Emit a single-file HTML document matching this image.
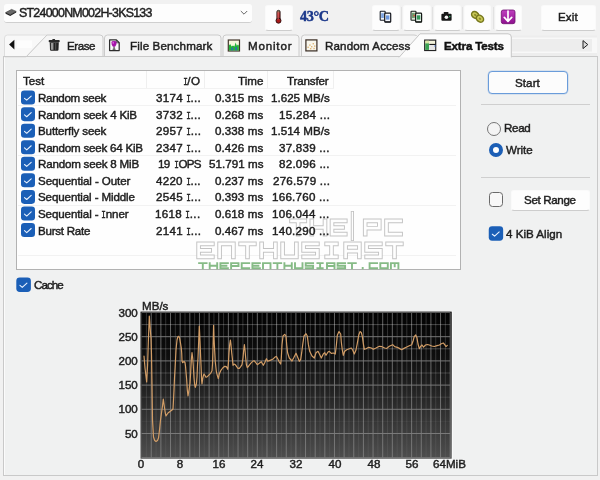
<!DOCTYPE html>
<html><head><meta charset="utf-8"><title>HD Tune Pro - Extra Tests</title>
<style>
html,body{margin:0;padding:0;}
body{width:600px;height:480px;background:#f1f1f1;position:relative;overflow:hidden;font-family:"Liberation Sans",sans-serif;font-size:12px;color:#1e1e1e;}
.a{position:absolute;box-sizing:border-box;}
.t{position:absolute;white-space:nowrap;line-height:14px;height:14px;will-change:transform;-webkit-text-stroke:0.45px currentColor;}
.btn{position:absolute;background:#fdfdfd;border:1px solid #fafafa;border-bottom-color:#cdcdcd;border-radius:3px;box-sizing:border-box;}
.cb{position:absolute;width:14px;height:14px;background:#1c5fb6;border-radius:3.5px;box-sizing:border-box;}
.cb svg{position:absolute;left:0;top:0;}
</style></head><body>
<!-- ===== top bar ===== -->
<div class="a" id="combo" style="left:4px;top:4px;width:248px;height:19px;background:#fdfdfd;border-radius:3px;border-bottom:1px solid #cfcfcf;"></div>
<div class="t" id="drive" style="left:19.04px;top:6.30px;font-size:12.4px;letter-spacing:-0.737px;">ST24000NM002H-3KS133</div>
<div class="btn" style="left:265px;top:5px;width:28px;height:26px;"></div>
<div class="t" id="temp" style="left:300.01px;top:9.18px;font-size:14.2px;letter-spacing:-0.353px;font-family:'Liberation Serif',serif;font-weight:bold;color:#1a378a;">43°C</div>
<div class="btn" style="left:372px;top:5px;width:28px;height:26px;"></div>
<div class="btn" style="left:403px;top:5px;width:28px;height:26px;"></div>
<div class="btn" style="left:434px;top:5px;width:27px;height:26px;"></div>
<div class="btn" style="left:464px;top:5px;width:27px;height:26px;"></div>
<div class="btn" style="left:495px;top:5px;width:27px;height:26px;"></div>
<div class="btn" style="left:541px;top:5px;width:55px;height:26px;"></div>
<div class="a" style="left:401px;top:7px;width:1px;height:22px;background:#e2e2e2;"></div>
<div class="a" style="left:432px;top:7px;width:1px;height:22px;background:#e2e2e2;"></div>
<div class="a" style="left:462px;top:7px;width:1px;height:22px;background:#e2e2e2;"></div>
<div class="a" style="left:493px;top:7px;width:1px;height:22px;background:#e2e2e2;"></div>
<div class="t" id="exit" style="left:558.35px;top:10.28px;font-size:11.6px;letter-spacing:0.133px;">Exit</div>
<svg class="a" style="left:0;top:0" width="600" height="34" viewBox="0 0 600 34">
<defs>
<linearGradient id="gTh" x1="0" y1="0" x2="0" y2="1"><stop offset="0" stop-color="#5a8a5a"/><stop offset="0.3" stop-color="#c03030"/><stop offset="1" stop-color="#a01818"/></linearGradient>
<linearGradient id="gPu" x1="0" y1="0" x2="0" y2="1"><stop offset="0" stop-color="#c040c0"/><stop offset="1" stop-color="#8e108e"/></linearGradient>
</defs>
<!-- drive glyph -->
<path d="M5.6 12.6 L11.6 9.4 L16.2 11.4 L10.2 14.8 Z" fill="#6a6a6a" stroke="#333" stroke-width="0.6"/>
<path d="M5.6 12.6 L10.2 14.8 L16.2 11.4 L16.2 12.4 L10.2 15.9 L5.6 13.7 Z" fill="#222"/>
<!-- chevron -->
<path d="M240.8 11 L244 14.2 L247.2 11" fill="none" stroke="#666" stroke-width="1"/>
<!-- thermometer -->
<rect x="276.9" y="10.4" width="3.2" height="10" rx="1.4" fill="url(#gTh)" stroke="#2a1414" stroke-width="0.9"/>
<circle cx="278.5" cy="20.7" r="2.5" fill="#a81818" stroke="#2a0c0c" stroke-width="0.9"/>
<rect x="277.6" y="11.5" width="1" height="8" fill="#e88" opacity="0.7"/>
<!-- copy text -->
<rect x="380.2" y="11.3" width="5" height="9" rx="0.6" fill="#eef3fb" stroke="#1e222c" stroke-width="1.1"/>
<rect x="381.2" y="13.2" width="2.6" height="4.8" fill="#7ba3e2"/>
<rect x="384.7" y="13.2" width="6" height="9" rx="0.8" fill="#f6f8fc" stroke="#16181e" stroke-width="1.2"/>
<rect x="386" y="15.4" width="3.4" height="4.2" fill="#6c98e0"/>
<rect x="385" y="21.3" width="5.6" height="1" fill="#16181e"/>
<!-- copy screenshot -->
<rect x="411" y="11.3" width="5" height="9" rx="0.6" fill="#dce6d6" stroke="#1e2620" stroke-width="1.1"/>
<rect x="412" y="13" width="2.8" height="5" fill="#6fa070"/>
<rect x="413.4" y="14.8" width="1.5" height="1.6" fill="#d4503c"/>
<rect x="415.6" y="13.2" width="6" height="9" rx="0.8" fill="#eef4ee" stroke="#141a16" stroke-width="1.2"/>
<rect x="416.9" y="15.3" width="3.4" height="4.3" fill="#34985a"/>
<rect x="415.9" y="21.3" width="5.6" height="1" fill="#141a16"/>
<!-- camera -->
<rect x="443.8" y="12" width="4.6" height="2.6" rx="0.6" fill="#1a1a1a"/>
<rect x="441.4" y="13.8" width="10.2" height="6.9" rx="1" fill="#161616"/>
<circle cx="446.4" cy="17.2" r="1.8" fill="#f4f4f4"/>
<circle cx="449.7" cy="16.6" r="0.8" fill="#2aa860"/>
<!-- chain / options -->
<g transform="rotate(38 477.5 16.8)"><ellipse cx="474.6" cy="16.8" rx="3.9" ry="3.1" fill="#c9c857" stroke="#77781e" stroke-width="1.5"/><ellipse cx="480.6" cy="16.8" rx="3.9" ry="3.1" fill="#c9c857" stroke="#77781e" stroke-width="1.5"/><ellipse cx="474.6" cy="16.8" rx="1.3" ry="1" fill="#8a8a2c"/><ellipse cx="480.6" cy="16.8" rx="1.3" ry="1" fill="#8a8a2c"/></g>
<!-- save / down -->
<rect x="501.3" y="10" width="13.7" height="13.7" rx="2" fill="url(#gPu)" stroke="#6e0e6e" stroke-width="0.8"/>
<path d="M508 11 L508 20.5 M504.3 17.4 L508 21.4 L511.7 17.4" fill="none" stroke="#fff" stroke-width="1.7" stroke-linecap="round" stroke-linejoin="round"/>
</svg>
<!-- ===== pane ===== -->
<div class="a" id="pane" style="left:3px;top:56px;width:595px;height:420px;border:1px solid #c9c9c9;background:#f0f1f1;box-shadow:inset 1px 0 0 #fbfbfb;"></div>
<!-- ===== tabs ===== -->
<svg class="a" style="left:0;top:30px" width="600" height="30" viewBox="0 30 600 30">
<!-- scroll-left stub -->
<path d="M4.5 57 L4.5 38 Q4.5 35 7.5 35 L47 35 L26 57 Z" fill="#f8f8f8" stroke="#dedede" stroke-width="1"/>
<rect x="17" y="40.4" width="15" height="7.6" fill="#fdfdfd"/>
<path d="M14.4 39.7 L14.4 49.5 L9.1 44.6 Z" fill="#111"/>
<!-- strip right of active tab -->
<rect x="512" y="35.5" width="85" height="20.5" fill="#ededed"/>
<rect x="512" y="37.6" width="85" height="1.2" fill="#fafafa"/><rect x="512" y="51.6" width="85" height="1.2" fill="#fafafa"/>
<rect x="592" y="39" width="5" height="13" fill="#f8f8f8"/>
<path d="M583 40.6 L583 48.6 L587.8 44.6 Z" fill="#dcdcdc" stroke="#222" stroke-width="1" stroke-linejoin="miter"/>
<!-- inactive tabs -->
<path d="M26 57 L47 35 L100 35 Q103 35 103 38 L103 57" fill="#f5f5f5" stroke="#cbcbcb" stroke-width="1"/>
<path d="M104.5 57 L104.5 38 Q104.5 35 107.5 35 L218 35 Q221 35 221 38 L221 57" fill="#f5f5f5" stroke="#cbcbcb" stroke-width="1"/>
<path d="M223 57 L223 38 Q223 35 226 35 L296 35 Q299 35 299 38 L299 57" fill="#f5f5f5" stroke="#cbcbcb" stroke-width="1"/>
<path d="M301.5 57 L301.5 38 Q301.5 35 304.5 35 L414 35 Q417 35 418 37 L418 57" fill="#f5f5f5" stroke="#cbcbcb" stroke-width="1"/>
<!-- pane top line -->
<rect x="3" y="56" width="595" height="1" fill="#c9c9c9"/>
<!-- active tab -->
<path d="M399 57.6 L420 33.8 L508 33.8 Q511.3 33.8 511.3 37 L511.3 57.6 Z" fill="#fcfcfc"/>
<path d="M399 57.4 L420 33.8 L508 33.8 Q511.3 33.8 511.3 37 L511.3 57.4" fill="none" stroke="#c6c6c6" stroke-width="1"/>
<!-- trash icon -->
<rect x="52.3" y="39.1" width="2.8" height="1.4" rx="0.4" fill="#2a2a2a"/>
<rect x="48.7" y="40" width="11" height="2.3" rx="0.7" fill="#2b2b2b"/>
<path d="M49.7 42.3 L58.8 42.3 L58.5 49.8 Q58.4 50.7 57.4 50.7 L51.1 50.7 Q50.1 50.7 50 49.8 Z" fill="#232323"/>
<rect x="50.9" y="43" width="2.2" height="6.8" fill="#9a9a9a"/><rect x="53.1" y="43" width="0.9" height="6.8" fill="#5c5c5c"/>
<rect x="55.2" y="43" width="1" height="6.8" fill="#5a5a5a"/>
<!-- file benchmark icon -->
<path d="M109.6 39.9 L116.4 39.9 L119.2 42.7 L119.2 50.6 L109.6 50.6 Z" fill="#fafafa" stroke="#2e2e2e" stroke-width="1.25" stroke-linejoin="round"/>
<path d="M116.3 40 L116.3 42.8 L119.1 42.8" fill="none" stroke="#2e2e2e" stroke-width="0.8"/>
<rect x="112.6" y="40.3" width="2.8" height="1" fill="#9a9a9a"/>
<path d="M111.4 42 Q111.4 40.9 114 40.9 Q116.6 40.9 116.6 42 L116.3 44.4 Q115.8 46.8 114 46.9 Q112.2 46.8 111.7 44.4 Z" fill="#a515a8"/>
<ellipse cx="113.2" cy="42.8" rx="0.8" ry="1.1" fill="#d862dc"/>
<rect x="113.5" y="46.8" width="1.1" height="2.4" fill="#3a3a3a"/><rect x="112.6" y="48.8" width="2.9" height="0.9" fill="#3a3a3a"/>
<!-- monitor icon -->
<rect x="228.3" y="40" width="11.2" height="11" fill="#f6f6de" stroke="#43352a" stroke-width="1.2"/>
<path d="M228.9 50.4 L228.9 45.6 L230.2 44 L231.6 46.4 L233 45.4 L234.4 46.6 L235.6 42.4 L236.8 45.8 L238 44.4 L238.9 45.6 L238.9 50.4 Z" fill="#22b23a"/>
<rect x="231.4" y="47.6" width="1.4" height="2.8" fill="#3060c8"/><rect x="235.4" y="47" width="1.4" height="3.4" fill="#3060c8"/>
<!-- random access icon -->
<rect x="305.9" y="39.9" width="11" height="11" fill="#f8f6ec" stroke="#3e3228" stroke-width="1.25"/>
<g fill="#d9a85e" opacity="0.8"><rect x="307.4" y="46.6" width="1.4" height="1.4"/><rect x="309.2" y="44.4" width="1.4" height="1.4"/><rect x="311" y="46" width="1.4" height="1.4"/><rect x="312.6" y="43" width="1.4" height="1.4"/><rect x="314" y="45.4" width="1.4" height="1.4"/><rect x="310" y="48" width="1.4" height="1.4"/><rect x="313.4" y="47.8" width="1.4" height="1.4"/></g>
<!-- extra tests icon -->
<rect x="424.7" y="40.1" width="11" height="10.4" fill="#f3f3dc" stroke="#242424" stroke-width="1.2"/>
<rect x="425.3" y="40.7" width="3.7" height="3" fill="#dbe7a6"/>
<rect x="425.3" y="43.4" width="3.7" height="6.5" fill="#3ba253"/>
<rect x="429" y="45" width="6.1" height="4.9" fill="#e6e6e6"/>
<rect x="429.3" y="43.9" width="6.2" height="1.1" fill="#1c1c1c"/>
<rect x="434.6" y="45.2" width="0.9" height="1.6" fill="#3a6cd0"/>
</svg>
<div class="t" id="tErase" style="left:67.05px;top:38.78px;font-size:11.6px;letter-spacing:-0.459px;">Erase</div>
<div class="t" id="tFile" style="left:129.75px;top:38.78px;font-size:11.6px;letter-spacing:0.135px;">File Benchmark</div>
<div class="t" id="tMon" style="left:247.65px;top:38.78px;font-size:11.6px;letter-spacing:0.811px;">Monitor</div>
<div class="t" id="tRand" style="left:324.65px;top:38.78px;font-size:11.6px;letter-spacing:0.129px;">Random Access</div>
<div class="t" id="tExtra" style="left:443.82px;top:38.78px;font-size:11.6px;letter-spacing:-0.163px;font-weight:bold;color:#111;">Extra Tests</div>
<!-- ===== list ===== -->
<div class="a" id="list" style="left:16px;top:70px;width:445px;height:200px;border:1px solid #b2b2b2;background:#fefefe;"></div>
<div class="a" style="left:18px;top:88px;width:316px;height:1px;background:#f2f2f2;"></div>
<div class="a" style="left:18px;top:105px;width:438px;height:1px;background:#f2f2f2;"></div>
<div class="a" style="left:18px;top:155px;width:438px;height:1px;background:#f2f2f2;"></div>
<div class="a" style="left:18px;top:205px;width:438px;height:1px;background:#f2f2f2;"></div>
<div class="a" style="left:18px;top:255px;width:438px;height:1px;background:#f2f2f2;"></div>
<!-- watermark -->
<svg class="a" style="left:0;top:205px" width="600" height="70" viewBox="0 205 600 70">
<path d="M291.5,220.9 L304.8,220.9 M298.1,220.9 L298.1,234.1 M311.8,220.9 L311.8,234.1 M325.0,220.9 L325.0,234.1 M311.8,227.5 L325.0,227.5 M345.3,220.9 L332.0,220.9 L332.0,234.1 L345.3,234.1 M332.0,227.5 L342.6,227.5 M365.2,234.1 L365.2,220.9 L379.3,220.9 L379.3,228.2 L365.2,228.2 M400.6,220.9 L386.5,220.9 L386.5,234.1 L400.6,234.1" fill="none" stroke="#c3c3c3" stroke-width="4.6" stroke-linecap="square" stroke-linejoin="miter"/>
<path d="M212.4,243.9 L198.6,243.9 L198.6,256.9 L212.4,256.9 M198.6,250.4 L209.7,250.4 M219.6,256.9 L219.6,243.9 L233.4,243.9 L233.4,256.9 M240.6,243.9 L254.4,243.9 M247.5,243.9 L247.5,256.9 M261.6,243.9 L261.6,256.9 M275.4,243.9 L275.4,256.9 M261.6,250.4 L275.4,250.4 M282.6,243.9 L282.6,256.9 L296.4,256.9 L296.4,243.9 M317.4,243.9 L303.6,243.9 L303.6,250.4 L317.4,250.4 L317.4,256.9 L303.6,256.9 M326.6,243.9 L336.4,243.9 M331.5,243.9 L331.5,256.9 M326.6,256.9 L336.4,256.9 M345.6,256.9 L345.6,243.9 L359.4,243.9 L359.4,256.9 M345.6,251.1 L359.4,251.1 M380.4,243.9 L366.6,243.9 L366.6,250.4 L380.4,250.4 L380.4,256.9 L366.6,256.9 M387.6,243.9 L401.4,243.9 M394.5,243.9 L394.5,256.9" fill="none" stroke="#c3c3c3" stroke-width="4.6" stroke-linecap="square" stroke-linejoin="miter"/>
<path d="M352.4,211 L352.4,241" fill="none" stroke="#c3c3c3" stroke-width="3.2"/>
<path d="M291.5,220.9 L304.8,220.9 M298.1,220.9 L298.1,234.1 M311.8,220.9 L311.8,234.1 M325.0,220.9 L325.0,234.1 M311.8,227.5 L325.0,227.5 M345.3,220.9 L332.0,220.9 L332.0,234.1 L345.3,234.1 M332.0,227.5 L342.6,227.5 M365.2,234.1 L365.2,220.9 L379.3,220.9 L379.3,228.2 L365.2,228.2 M400.6,220.9 L386.5,220.9 L386.5,234.1 L400.6,234.1" fill="none" stroke="#fefefe" stroke-width="2.6999999999999997" stroke-linecap="square" stroke-linejoin="miter"/>
<path d="M212.4,243.9 L198.6,243.9 L198.6,256.9 L212.4,256.9 M198.6,250.4 L209.7,250.4 M219.6,256.9 L219.6,243.9 L233.4,243.9 L233.4,256.9 M240.6,243.9 L254.4,243.9 M247.5,243.9 L247.5,256.9 M261.6,243.9 L261.6,256.9 M275.4,243.9 L275.4,256.9 M261.6,250.4 L275.4,250.4 M282.6,243.9 L282.6,256.9 L296.4,256.9 L296.4,243.9 M317.4,243.9 L303.6,243.9 L303.6,250.4 L317.4,250.4 L317.4,256.9 L303.6,256.9 M326.6,243.9 L336.4,243.9 M331.5,243.9 L331.5,256.9 M326.6,256.9 L336.4,256.9 M345.6,256.9 L345.6,243.9 L359.4,243.9 L359.4,256.9 M345.6,251.1 L359.4,251.1 M380.4,243.9 L366.6,243.9 L366.6,250.4 L380.4,250.4 L380.4,256.9 L366.6,256.9 M387.6,243.9 L401.4,243.9 M394.5,243.9 L394.5,256.9" fill="none" stroke="#fefefe" stroke-width="2.6999999999999997" stroke-linecap="square" stroke-linejoin="miter"/>
<path d="M352.4,211.8 L352.4,240.2" fill="none" stroke="#fefefe" stroke-width="1.4"/>
<path d="M199.1,263.1 L206.6,263.1 M202.8,263.1 L202.8,268.2 M209.7,263.1 L209.7,268.2 M217.2,263.1 L217.2,268.2 M209.7,265.7 L217.2,265.7 M227.9,263.1 L220.4,263.1 L220.4,268.2 L227.9,268.2 M220.4,265.7 L226.4,265.7 M231.1,268.2 L231.1,263.1 L238.5,263.1 L238.5,266.0 L231.1,266.0 M249.2,263.1 L241.7,263.1 L241.7,268.2 L249.2,268.2 M259.9,263.1 L252.4,263.1 L252.4,268.2 L259.9,268.2 M252.4,265.7 L258.4,265.7 M263.0,268.2 L263.0,263.1 L270.5,263.1 L270.5,268.2 M273.7,263.1 L281.2,263.1 M277.4,263.1 L277.4,268.2 M284.4,263.1 L284.4,268.2 M291.8,263.1 L291.8,268.2 M284.4,265.7 L291.8,265.7 M295.0,263.1 L295.0,268.2 L302.5,268.2 L302.5,263.1 M313.1,263.1 L305.7,263.1 L305.7,265.7 L313.1,265.7 L313.1,268.2 L305.7,268.2 M317.4,263.1 L322.7,263.1 M320.1,263.1 L320.1,268.2 M317.4,268.2 L322.7,268.2 M327.0,268.2 L327.0,263.1 L334.5,263.1 L334.5,268.2 M327.0,266.0 L334.5,266.0 M345.1,263.1 L337.6,263.1 L337.6,265.7 L345.1,265.7 L345.1,268.2 L337.6,268.2 M348.3,263.1 L355.8,263.1 M352.0,263.1 L352.0,268.2 M362.7,268.0 L362.7,268.2 M377.1,263.1 L369.6,263.1 L369.6,268.2 L377.1,268.2 M380.3,263.1 L387.8,263.1 L387.8,268.2 L380.3,268.2 Z M390.9,268.2 L390.9,263.1 L398.4,263.1 L398.4,268.2 M394.7,263.1 L394.7,266.2" fill="none" stroke="#86bb86" stroke-width="1.9" stroke-linecap="square" stroke-linejoin="miter"/>
</svg>
<div class="t" id="hTest" style="left:22.64px;top:74.38px;font-size:11.6px;letter-spacing:-0.010px;">Test</div>
<div class="t" id="hIO" style="left:183.22px;top:74.38px;font-size:11.6px;letter-spacing:0.557px;"><span style="display:inline-block;font-family:'Liberation Mono',monospace;width:6.96px;margin:0 -1.39px;transform:scaleX(.66);letter-spacing:0;">I</span>/O</div>
<div class="t" id="hTime" style="left:237.64px;top:74.38px;font-size:11.6px;letter-spacing:0.010px;">Time</div>
<div class="t" id="hTr" style="left:287.04px;top:74.38px;font-size:11.6px;letter-spacing:-0.144px;">Transfer</div>
<div class="a" style="left:146px;top:71px;width:1px;height:17px;background:#efefef;"></div>
<div class="a" style="left:204px;top:71px;width:1px;height:17px;background:#efefef;"></div>
<div class="a" style="left:267px;top:71px;width:1px;height:17px;background:#efefef;"></div>
<div class="a" style="left:333px;top:71px;width:1px;height:17px;background:#efefef;"></div>
<svg class="a" style="left:20px;top:89px" width="18" height="18" viewBox="0 0 18 18"><rect x="1.00" y="1.60" width="14.0" height="14.0" rx="3.30" fill="#1b5fb7"/><path d="M4.50 9.30 L6.70 11.20 L11.20 7.10" fill="none" stroke="#eaf3ff" stroke-width="1.1" stroke-linecap="round" stroke-linejoin="round"/></svg>
<div class="t" id="r0a" style="left:38.00px;top:91.18px;font-size:11.6px;letter-spacing:-0.314px;">Random seek</div>
<div class="t" id="r0b" style="left:155.88px;top:91.18px;font-size:11.6px;letter-spacing:0.264px;">3174 <span style="display:inline-block;font-family:'Liberation Mono',monospace;width:6.96px;margin:0 -1.39px;transform:scaleX(.66);letter-spacing:0;">I</span>...</div>
<div class="t" id="r0c" style="left:215.17px;top:91.18px;font-size:11.6px;letter-spacing:0.076px;">0.315 ms</div>
<div class="t" id="r0d" style="left:271.48px;top:91.18px;font-size:11.6px;letter-spacing:0.007px;">1.625 MB/s</div>
<svg class="a" style="left:20px;top:106px" width="18" height="18" viewBox="0 0 18 18"><rect x="1.00" y="1.15" width="14.0" height="14.0" rx="3.30" fill="#1b5fb7"/><path d="M4.50 8.85 L6.70 10.75 L11.20 6.65" fill="none" stroke="#eaf3ff" stroke-width="1.1" stroke-linecap="round" stroke-linejoin="round"/></svg>
<div class="t" id="r1a" style="left:38.00px;top:107.73px;font-size:11.6px;letter-spacing:-0.216px;">Random seek 4 KiB</div>
<div class="t" id="r1b" style="left:155.88px;top:107.73px;font-size:11.6px;letter-spacing:0.264px;">3732 <span style="display:inline-block;font-family:'Liberation Mono',monospace;width:6.96px;margin:0 -1.39px;transform:scaleX(.66);letter-spacing:0;">I</span>...</div>
<div class="t" id="r1c" style="left:215.17px;top:107.73px;font-size:11.6px;letter-spacing:0.076px;">0.268 ms</div>
<div class="t" id="r1d" style="left:278.72px;top:107.73px;font-size:11.6px;letter-spacing:0.285px;">15.284 ...</div>
<svg class="a" style="left:20px;top:122px" width="18" height="18" viewBox="0 0 18 18"><rect x="1.00" y="1.70" width="14.0" height="14.0" rx="3.30" fill="#1b5fb7"/><path d="M4.50 9.40 L6.70 11.30 L11.20 7.20" fill="none" stroke="#eaf3ff" stroke-width="1.1" stroke-linecap="round" stroke-linejoin="round"/></svg>
<div class="t" id="r2a" style="left:38.00px;top:124.28px;font-size:11.6px;letter-spacing:-0.142px;">Butterfly seek</div>
<div class="t" id="r2b" style="left:155.74px;top:124.28px;font-size:11.6px;letter-spacing:0.281px;">2957 <span style="display:inline-block;font-family:'Liberation Mono',monospace;width:6.96px;margin:0 -1.39px;transform:scaleX(.66);letter-spacing:0;">I</span>...</div>
<div class="t" id="r2c" style="left:215.17px;top:124.28px;font-size:11.6px;letter-spacing:0.076px;">0.338 ms</div>
<div class="t" id="r2d" style="left:271.48px;top:124.28px;font-size:11.6px;letter-spacing:0.007px;">1.514 MB/s</div>
<svg class="a" style="left:20px;top:139px" width="18" height="18" viewBox="0 0 18 18"><rect x="1.00" y="1.25" width="14.0" height="14.0" rx="3.30" fill="#1b5fb7"/><path d="M4.50 8.95 L6.70 10.85 L11.20 6.75" fill="none" stroke="#eaf3ff" stroke-width="1.1" stroke-linecap="round" stroke-linejoin="round"/></svg>
<div class="t" id="r3a" style="left:38.00px;top:140.83px;font-size:11.6px;letter-spacing:-0.230px;">Random seek 64 KiB</div>
<div class="t" id="r3b" style="left:155.74px;top:140.83px;font-size:11.6px;letter-spacing:0.281px;">2347 <span style="display:inline-block;font-family:'Liberation Mono',monospace;width:6.96px;margin:0 -1.39px;transform:scaleX(.66);letter-spacing:0;">I</span>...</div>
<div class="t" id="r3c" style="left:215.17px;top:140.83px;font-size:11.6px;letter-spacing:0.076px;">0.426 ms</div>
<div class="t" id="r3d" style="left:279.17px;top:140.83px;font-size:11.6px;letter-spacing:0.236px;">37.839 ...</div>
<svg class="a" style="left:20px;top:155px" width="18" height="18" viewBox="0 0 18 18"><rect x="1.00" y="1.80" width="14.0" height="14.0" rx="3.30" fill="#1b5fb7"/><path d="M4.50 9.50 L6.70 11.40 L11.20 7.30" fill="none" stroke="#eaf3ff" stroke-width="1.1" stroke-linecap="round" stroke-linejoin="round"/></svg>
<div class="t" id="r4a" style="left:38.00px;top:157.38px;font-size:11.6px;letter-spacing:-0.205px;">Random seek 8 MiB</div>
<div class="t" id="r4b" style="left:157.54px;top:157.38px;font-size:11.6px;letter-spacing:-0.702px;word-spacing:2.2px;">19 <span style="display:inline-block;font-family:'Liberation Mono',monospace;width:6.96px;margin:0 -1.39px;transform:scaleX(.66);letter-spacing:0;">I</span>OPS</div>
<div class="t" id="r4c" style="left:208.83px;top:157.38px;font-size:11.6px;letter-spacing:0.053px;">51.791 ms</div>
<div class="t" id="r4d" style="left:279.10px;top:157.38px;font-size:11.6px;letter-spacing:0.243px;">82.096 ...</div>
<svg class="a" style="left:20px;top:172px" width="18" height="18" viewBox="0 0 18 18"><rect x="1.00" y="1.35" width="14.0" height="14.0" rx="3.30" fill="#1b5fb7"/><path d="M4.50 9.05 L6.70 10.95 L11.20 6.85" fill="none" stroke="#eaf3ff" stroke-width="1.1" stroke-linecap="round" stroke-linejoin="round"/></svg>
<div class="t" id="r5a" style="left:38.00px;top:173.93px;font-size:11.6px;letter-spacing:-0.096px;">Sequential - Outer</div>
<div class="t" id="r5b" style="left:156.05px;top:173.93px;font-size:11.6px;letter-spacing:0.242px;">4220 <span style="display:inline-block;font-family:'Liberation Mono',monospace;width:6.96px;margin:0 -1.39px;transform:scaleX(.66);letter-spacing:0;">I</span>...</div>
<div class="t" id="r5c" style="left:215.17px;top:173.93px;font-size:11.6px;letter-spacing:0.076px;">0.237 ms</div>
<div class="t" id="r5d" style="left:272.74px;top:173.93px;font-size:11.6px;letter-spacing:0.210px;">276.579 ...</div>
<svg class="a" style="left:20px;top:188px" width="18" height="18" viewBox="0 0 18 18"><rect x="1.00" y="1.90" width="14.0" height="14.0" rx="3.30" fill="#1b5fb7"/><path d="M4.50 9.60 L6.70 11.50 L11.20 7.40" fill="none" stroke="#eaf3ff" stroke-width="1.1" stroke-linecap="round" stroke-linejoin="round"/></svg>
<div class="t" id="r6a" style="left:38.00px;top:190.48px;font-size:11.6px;letter-spacing:-0.126px;">Sequential - Middle</div>
<div class="t" id="r6b" style="left:155.74px;top:190.48px;font-size:11.6px;letter-spacing:0.281px;">2545 <span style="display:inline-block;font-family:'Liberation Mono',monospace;width:6.96px;margin:0 -1.39px;transform:scaleX(.66);letter-spacing:0;">I</span>...</div>
<div class="t" id="r6c" style="left:215.17px;top:190.48px;font-size:11.6px;letter-spacing:0.076px;">0.393 ms</div>
<div class="t" id="r6d" style="left:272.44px;top:190.48px;font-size:11.6px;letter-spacing:0.240px;">166.760 ...</div>
<svg class="a" style="left:20px;top:205px" width="18" height="18" viewBox="0 0 18 18"><rect x="1.00" y="1.45" width="14.0" height="14.0" rx="3.30" fill="#1b5fb7"/><path d="M4.50 9.15 L6.70 11.05 L11.20 6.95" fill="none" stroke="#eaf3ff" stroke-width="1.1" stroke-linecap="round" stroke-linejoin="round"/></svg>
<div class="t" id="r7a" style="left:38.00px;top:207.03px;font-size:11.6px;letter-spacing:-0.118px;">Sequential - <span style="display:inline-block;font-family:'Liberation Mono',monospace;width:6.96px;margin:0 -1.39px;transform:scaleX(.66);letter-spacing:0;">I</span>nner</div>
<div class="t" id="r7b" style="left:155.44px;top:207.03px;font-size:11.6px;letter-spacing:0.319px;">1618 <span style="display:inline-block;font-family:'Liberation Mono',monospace;width:6.96px;margin:0 -1.39px;transform:scaleX(.66);letter-spacing:0;">I</span>...</div>
<div class="t" id="r7c" style="left:215.17px;top:207.03px;font-size:11.6px;letter-spacing:0.076px;">0.618 ms</div>
<div class="t" id="r7d" style="left:272.44px;top:207.03px;font-size:11.6px;letter-spacing:0.240px;">106.044 ...</div>
<svg class="a" style="left:20px;top:222px" width="18" height="18" viewBox="0 0 18 18"><rect x="1.00" y="1.00" width="14.0" height="14.0" rx="3.30" fill="#1b5fb7"/><path d="M4.50 8.70 L6.70 10.60 L11.20 6.50" fill="none" stroke="#eaf3ff" stroke-width="1.1" stroke-linecap="round" stroke-linejoin="round"/></svg>
<div class="t" id="r8a" style="left:38.00px;top:223.58px;font-size:11.6px;letter-spacing:-0.259px;">Burst Rate</div>
<div class="t" id="r8b" style="left:155.74px;top:223.58px;font-size:11.6px;letter-spacing:0.281px;">2141 <span style="display:inline-block;font-family:'Liberation Mono',monospace;width:6.96px;margin:0 -1.39px;transform:scaleX(.66);letter-spacing:0;">I</span>...</div>
<div class="t" id="r8c" style="left:215.17px;top:223.58px;font-size:11.6px;letter-spacing:0.076px;">0.467 ms</div>
<div class="t" id="r8d" style="left:272.44px;top:223.58px;font-size:11.6px;letter-spacing:0.240px;">140.290 ...</div>
<!-- ===== right panel ===== -->
<div class="a" style="left:488px;top:71px;width:80px;height:22.5px;border:1px solid #6a9cda;border-radius:4px;background:#fcfcfc;box-shadow:0 0 0 0.5px rgba(106,156,218,.35);"></div>
<div class="t" id="start" style="left:515.47px;top:76.18px;font-size:11.6px;letter-spacing:0.079px;">Start</div>
<div class="a" style="left:481px;top:104px;width:109px;height:1px;background:#cfcfcf;"></div>
<div class="a" style="left:487.3px;top:121.5px;width:14px;height:14px;border:1.5px solid #767676;border-radius:50%;background:#f4f4f4;"></div>
<div class="t" id="read" style="left:503.85px;top:120.98px;font-size:11.6px;letter-spacing:-0.344px;">Read</div>
<div class="a" style="left:488.6px;top:143.2px;width:14px;height:14px;border:4.7px solid #1c5fb6;border-radius:50%;background:#fff;"></div>
<div class="t" id="write" style="left:506.15px;top:142.88px;font-size:11.6px;letter-spacing:-0.022px;">Write</div>
<div class="a" style="left:481px;top:177px;width:109px;height:1px;background:#cfcfcf;"></div>
<div class="a" style="left:488.8px;top:192.3px;width:14.4px;height:14.6px;border:1.2px solid #6a6a6a;border-radius:3.5px;background:#f8f8f8;"></div>
<div class="btn" style="left:511px;top:190px;width:78.6px;height:20.6px;"></div>
<div class="t" id="setrange" style="left:524.47px;top:193.48px;font-size:11.6px;letter-spacing:-0.347px;">Set Range</div>
<svg class="a" style="left:487px;top:225px" width="18" height="18" viewBox="0 0 18 18"><rect x="1.75" y="1.30" width="14.4" height="14.4" rx="3.39" fill="#1b5fb7"/><path d="M5.35 9.22 L7.61 11.17 L12.24 6.96" fill="none" stroke="#eaf3ff" stroke-width="1.1" stroke-linecap="round" stroke-linejoin="round"/></svg>
<div class="t" id="align" style="left:506.03px;top:227.18px;font-size:11.6px;letter-spacing:0.012px;">4 KiB Align</div>
<!-- ===== cache ===== -->
<svg class="a" style="left:15px;top:276px" width="18" height="18" viewBox="0 0 18 18"><rect x="1.30" y="1.40" width="14.6" height="14.6" rx="3.44" fill="#1b5fb7"/><path d="M4.95 9.43 L7.24 11.41 L11.94 7.14" fill="none" stroke="#eaf3ff" stroke-width="1.1" stroke-linecap="round" stroke-linejoin="round"/></svg>
<div class="t" id="cache" style="left:34.11px;top:277.78px;font-size:11.6px;letter-spacing:-0.957px;">Cache</div>
<!-- ===== chart ===== -->
<svg class="a" style="left:0;top:0" width="600" height="480" viewBox="0 0 600 480">
<defs><linearGradient id="bg" x1="0" y1="0" x2="0" y2="1"><stop offset="0" stop-color="#030303"/><stop offset="0.3" stop-color="#0e0e0e"/><stop offset="0.62" stop-color="#2a2a2a"/><stop offset="1" stop-color="#4e4e4e"/></linearGradient><linearGradient id="vM" gradientUnits="userSpaceOnUse" x1="0" y1="312.5" x2="0" y2="457.7"><stop offset="0" stop-color="#626262"/><stop offset="1" stop-color="#787878"/></linearGradient><linearGradient id="vm" gradientUnits="userSpaceOnUse" x1="0" y1="312.5" x2="0" y2="457.7"><stop offset="0" stop-color="#343434"/><stop offset="0.5" stop-color="#3e3e3e"/><stop offset="1" stop-color="#565656"/></linearGradient></defs>
<rect x="139.9" y="311.0" width="312.9" height="148.6" fill="#fbfbfb"/>
<rect x="140.5" y="311.6" width="311.2" height="147.1" fill="url(#bg)"/>
<path d="M141.60,312.5 V457.7 M146.42,312.5 V457.7 M156.07,312.5 V457.7 M165.71,312.5 V457.7 M175.35,312.5 V457.7 M185.00,312.5 V457.7 M194.64,312.5 V457.7 M204.28,312.5 V457.7 M213.93,312.5 V457.7 M223.57,312.5 V457.7 M233.22,312.5 V457.7 M242.86,312.5 V457.7 M252.50,312.5 V457.7 M262.15,312.5 V457.7 M271.79,312.5 V457.7 M281.43,312.5 V457.7 M291.08,312.5 V457.7 M300.72,312.5 V457.7 M310.37,312.5 V457.7 M320.01,312.5 V457.7 M329.65,312.5 V457.7 M339.30,312.5 V457.7 M348.94,312.5 V457.7 M358.58,312.5 V457.7 M368.23,312.5 V457.7 M377.87,312.5 V457.7 M387.52,312.5 V457.7 M397.16,312.5 V457.7 M406.80,312.5 V457.7 M416.45,312.5 V457.7 M426.09,312.5 V457.7 M435.73,312.5 V457.7 M445.38,312.5 V457.7" stroke="url(#vm)" stroke-width="0.9" fill="none"/>
<path d="M151.24,312.5 V457.7 M160.89,312.5 V457.7 M170.53,312.5 V457.7 M180.18,312.5 V457.7 M189.82,312.5 V457.7 M199.46,312.5 V457.7 M209.11,312.5 V457.7 M218.75,312.5 V457.7 M228.39,312.5 V457.7 M238.04,312.5 V457.7 M247.68,312.5 V457.7 M257.32,312.5 V457.7 M266.97,312.5 V457.7 M276.61,312.5 V457.7 M286.26,312.5 V457.7 M295.90,312.5 V457.7 M305.54,312.5 V457.7 M315.19,312.5 V457.7 M324.83,312.5 V457.7 M334.48,312.5 V457.7 M344.12,312.5 V457.7 M353.76,312.5 V457.7 M363.41,312.5 V457.7 M373.05,312.5 V457.7 M382.69,312.5 V457.7 M392.34,312.5 V457.7 M401.98,312.5 V457.7 M411.62,312.5 V457.7 M421.27,312.5 V457.7 M430.91,312.5 V457.7 M440.56,312.5 V457.7 M450.20,312.5 V457.7" stroke="url(#vM)" stroke-width="1" fill="none"/>
<line x1="141.6" y1="312.50" x2="450.2" y2="312.50" stroke="#5c5c5c" stroke-width="0.95"/>
<line x1="141.6" y1="324.60" x2="450.2" y2="324.60" stroke="#fff" stroke-opacity="0.27" stroke-width="0.95"/>
<line x1="141.6" y1="336.70" x2="450.2" y2="336.70" stroke="#7c7c7c" stroke-width="0.95"/>
<line x1="141.6" y1="348.80" x2="450.2" y2="348.80" stroke="#fff" stroke-opacity="0.25" stroke-width="0.95"/>
<line x1="141.6" y1="360.90" x2="450.2" y2="360.90" stroke="#7c7c7c" stroke-width="0.95"/>
<line x1="141.6" y1="373.00" x2="450.2" y2="373.00" stroke="#fff" stroke-opacity="0.2" stroke-width="0.95"/>
<line x1="141.6" y1="385.10" x2="450.2" y2="385.10" stroke="#7c7c7c" stroke-width="0.95"/>
<line x1="141.6" y1="397.20" x2="450.2" y2="397.20" stroke="#fff" stroke-opacity="0.13" stroke-width="0.95"/>
<line x1="141.6" y1="409.30" x2="450.2" y2="409.30" stroke="#7c7c7c" stroke-width="0.95"/>
<line x1="141.6" y1="421.40" x2="450.2" y2="421.40" stroke="#fff" stroke-opacity="0.05" stroke-width="0.95"/>
<line x1="141.6" y1="433.50" x2="450.2" y2="433.50" stroke="#7c7c7c" stroke-width="0.95"/>
<line x1="141.6" y1="457.70" x2="450.2" y2="457.70" stroke="#7c7c7c" stroke-width="0.95"/>
<polyline points="144.0,356.0 145.0,368.0 146.7,382.0 147.6,365.0 148.4,340.0 149.3,316.0 150.3,330.0 151.0,338.0 151.5,355.0 152.0,385.0 152.5,420.0 153.5,437.0 154.7,440.5 156.0,441.5 157.5,440.5 158.5,438.0 159.5,430.0 160.5,420.0 161.5,413.0 162.5,406.0 163.3,399.0 164.4,407.0 165.3,413.0 166.0,416.0 168.0,413.0 170.0,411.5 172.0,410.0 173.0,409.0 173.5,400.0 174.0,390.0 174.5,378.0 175.2,366.0 176.0,350.0 177.0,340.0 177.8,337.0 178.7,336.3 179.6,338.0 180.4,342.7 181.3,348.0 181.7,353.0 182.0,360.7 182.7,362.7 184.0,361.3 185.0,362.7 185.5,366.0 186.0,372.0 186.7,380.0 187.3,390.0 188.0,396.0 188.7,392.0 189.3,388.0 190.0,383.0 190.7,372.0 191.3,360.0 192.0,352.7 192.7,358.0 193.3,366.0 194.0,378.0 194.7,385.0 195.3,387.3 196.4,384.0 197.0,377.0 197.5,365.0 198.0,358.0 198.7,341.0 199.3,326.0 200.0,341.0 200.7,358.0 201.3,372.0 201.6,380.0 202.0,384.0 202.7,378.7 203.3,376.0 204.0,374.0 205.0,375.5 206.0,377.3 207.3,376.7 209.3,374.7 210.7,373.3 212.0,370.7 212.5,364.0 213.0,348.0 213.6,325.3 214.0,338.0 214.7,351.0 215.3,362.0 216.3,371.3 217.3,375.3 218.3,378.7 219.3,374.0 220.7,370.7 222.7,368.0 224.7,366.3 226.4,366.7 227.7,369.3 228.4,363.3 229.0,352.7 229.7,344.7 230.4,340.0 231.0,344.7 231.7,352.7 232.3,358.0 233.0,365.3 234.0,364.0 235.3,364.7 236.7,366.7 238.0,368.4 239.3,368.4 240.7,366.7 242.0,364.7 243.0,358.0 243.7,350.0 244.4,344.7 245.0,350.0 245.7,358.0 246.4,364.7 247.3,367.6 248.7,366.0 250.7,363.3 252.7,361.3 254.0,360.7 255.3,362.0 257.3,364.7 259.3,363.3 261.3,361.7 263.3,365.3 264.7,362.7 266.4,358.7 267.7,361.3 270.0,360.4 272.7,359.3 274.7,357.3 276.3,356.4 278.0,359.3 279.3,362.0 280.7,364.0 281.3,358.0 282.0,344.7 283.0,336.0 284.7,334.3 286.0,336.0 286.7,344.7 287.6,352.7 289.3,358.0 292.0,361.0 294.0,357.3 296.0,353.3 297.7,357.3 299.3,361.3 300.7,359.3 301.7,352.7 302.7,344.7 304.0,336.0 306.0,333.7 307.3,336.0 308.4,344.7 309.7,351.3 312.0,356.0 314.3,358.0 316.0,352.7 318.0,351.3 320.0,355.3 321.3,358.0 323.3,354.0 324.7,352.7 326.0,355.3 328.0,352.0 329.3,351.3 331.3,353.3 333.7,353.0 335.3,354.0 336.4,344.7 337.3,335.3 339.0,331.6 340.7,334.0 341.3,342.0 342.3,350.0 343.3,355.3 344.7,351.3 346.7,349.7 349.3,348.7 351.3,348.0 352.7,350.0 354.3,354.0 356.0,350.0 357.3,343.3 358.7,335.3 360.0,331.6 361.3,332.5 362.4,336.7 363.3,343.3 364.3,349.3 366.0,348.7 368.7,347.3 371.3,348.0 373.3,349.3 376.0,348.0 379.3,346.3 382.0,346.7 384.7,348.0 386.7,348.4 389.3,346.3 392.7,344.7 394.7,346.7 397.3,347.3 399.3,348.4 401.6,349.7 404.0,348.4 406.7,347.0 409.3,345.7 411.7,344.7 413.0,341.3 414.2,336.7 415.7,335.0 417.0,337.8 418.0,344.0 419.3,348.7 420.7,346.4 422.0,345.0 423.5,347.2 425.5,345.0 427.3,344.5 429.3,345.0 431.7,346.0 434.3,346.5 437.0,345.6 439.5,345.0 441.3,343.7 443.3,343.0 444.7,344.7 446.0,346.6 447.3,345.3" fill="none" stroke="#d29d66" stroke-width="1.2" stroke-linejoin="round" stroke-linecap="round"/>
</svg>
<div class="t" style="left:87px;width:50.8px;text-align:right;top:305.6px;font-size:11.6px;">300</div>
<div class="t" style="left:87px;width:50.8px;text-align:right;top:329.8px;font-size:11.6px;">250</div>
<div class="t" style="left:87px;width:50.8px;text-align:right;top:354.0px;font-size:11.6px;">200</div>
<div class="t" style="left:87px;width:50.8px;text-align:right;top:378.2px;font-size:11.6px;">150</div>
<div class="t" style="left:87px;width:50.8px;text-align:right;top:402.4px;font-size:11.6px;">100</div>
<div class="t" style="left:87px;width:50.8px;text-align:right;top:426.6px;font-size:11.6px;">50</div>
<div class="t" style="left:121.4px;width:40px;text-align:center;top:457.2px;font-size:11.6px;">0</div>
<div class="t" style="left:160.1px;width:40px;text-align:center;top:457.2px;font-size:11.6px;">8</div>
<div class="t" style="left:198.8px;width:40px;text-align:center;top:457.2px;font-size:11.6px;">16</div>
<div class="t" style="left:237.4px;width:40px;text-align:center;top:457.2px;font-size:11.6px;">24</div>
<div class="t" style="left:276.1px;width:40px;text-align:center;top:457.2px;font-size:11.6px;">32</div>
<div class="t" style="left:314.8px;width:40px;text-align:center;top:457.2px;font-size:11.6px;">40</div>
<div class="t" style="left:353.5px;width:40px;text-align:center;top:457.2px;font-size:11.6px;">48</div>
<div class="t" style="left:392.2px;width:40px;text-align:center;top:457.2px;font-size:11.6px;">56</div>
<div class="t" id="mib" style="left:433.3px;top:457.2px;font-size:11.6px;">64MiB</div>
<div class="t" id="mbs" style="left:141.9px;top:299.0px;font-size:11.6px;">MB/s</div>
</body></html>
